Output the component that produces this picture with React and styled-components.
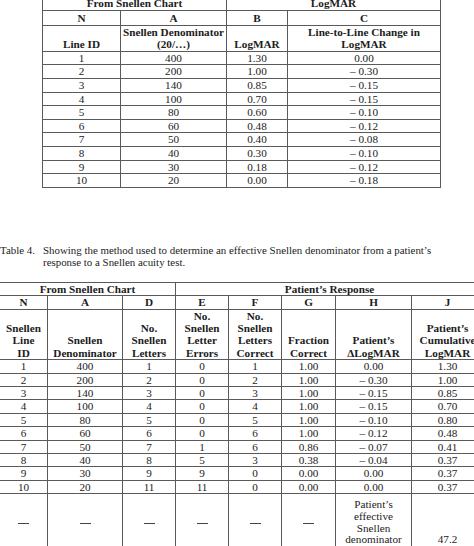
import React from "react";
import styled, { createGlobalStyle } from "styled-components";

const GlobalStyle = createGlobalStyle`
  html, body {
    margin: 0;
    padding: 0;
    background: #fff;
    overflow: hidden;
  }
  body {
    font-family: "Liberation Serif", "Times New Roman", serif;
    color: #1c1c1c;
  }
`;

const lineChart = [
  ["1", "400", "1.30", "0.00"],
  ["2", "200", "1.00", "– 0.30"],
  ["3", "140", "0.85", "– 0.15"],
  ["4", "100", "0.70", "– 0.15"],
  ["5", "80", "0.60", "– 0.10"],
  ["6", "60", "0.48", "– 0.12"],
  ["7", "50", "0.40", "– 0.08"],
  ["8", "40", "0.30", "– 0.10"],
  ["9", "30", "0.18", "– 0.12"],
  ["10", "20", "0.00", "– 0.18"],
];

const response = [
  ["1", "400", "1", "0", "1", "1.00", "0.00", "1.30"],
  ["2", "200", "2", "0", "2", "1.00", "– 0.30", "1.00"],
  ["3", "140", "3", "0", "3", "1.00", "– 0.15", "0.85"],
  ["4", "100", "4", "0", "4", "1.00", "– 0.15", "0.70"],
  ["5", "80", "5", "0", "5", "1.00", "– 0.10", "0.80"],
  ["6", "60", "6", "0", "6", "1.00", "– 0.12", "0.48"],
  ["7", "50", "7", "1", "6", "0.86", "– 0.07", "0.41"],
  ["8", "40", "8", "5", "3", "0.38", "– 0.04", "0.37"],
  ["9", "30", "9", "9", "0", "0.00", "0.00", "0.37"],
  ["10", "20", "11", "11", "0", "0.00", "0.00", "0.37"],
];

const serif = `"Liberation Serif", "Times New Roman", serif`;

const Page = styled.div`
  display: flex;
  flex-direction: column;
  font-family: ${serif};
`;

const TopWrap = styled.div`
  margin-top: -4px;
  padding-left: 42px;
`;

const Table = styled.table`
  border-collapse: collapse;
  table-layout: fixed;
  width: ${(p) => p.$width}px;
  font-family: ${serif};
  font-size: 11.2px;
  color: #1c1c1c;
  margin-left: ${(p) => p.$shift || 0}px;
`;

const Cell = styled.td`
  border: 1px solid #5a5a5a;
  padding: ${(p) => (p.$pad ? `${p.$pad}px 1px` : "0 1px")};
  text-align: center;
  vertical-align: ${(p) => p.$valign || "middle"};
  line-height: ${(p) => p.$lh || 12.4}px;
  white-space: nowrap;
  font-family: ${serif};
  font-weight: 400;
`;

const Head = styled(Cell).attrs({ as: "th" })`
  font-weight: 700;
`;

const Caption = styled.div`
  display: flex;
  margin-top: 56px;
  font-size: 10.9px;
  line-height: 12px;
`;

const CaptionLabel = styled.span`
  flex: 0 0 43px;
`;

const CaptionText = styled.span`
  flex: 1;
  padding-right: 30px;
`;

const BottomWrap = styled.div`
  margin-top: 14px;
`;

const Dash = styled.span`
  display: inline-block;
  width: 11px;
  border-top: 1px solid #444;
  vertical-align: middle;
`;

export default function App() {
  return (
    <Page>
      <GlobalStyle />
      <TopWrap>
        <Table $width={398}>
          <colgroup>
            <col style={{ width: 78 }} />
            <col style={{ width: 106 }} />
            <col style={{ width: 61 }} />
            <col style={{ width: 153 }} />
          </colgroup>
          <thead>
            <tr>
              <Head colSpan={2} $lh={12.6}>From Snellen Chart</Head>
              <Head colSpan={2} $lh={12.6}>LogMAR</Head>
            </tr>
            <tr>
              <Head $lh={14}>N</Head>
              <Head $lh={14}>A</Head>
              <Head $lh={14}>B</Head>
              <Head $lh={14}>C</Head>
            </tr>
            <tr>
              <Head $valign="bottom" $lh={12.6}>Line ID</Head>
              <Head $valign="bottom" $lh={12.6}>
                Snellen Denominator
                <br />
                (20/…)
              </Head>
              <Head $valign="bottom" $lh={12.6}>LogMAR</Head>
              <Head $valign="bottom" $lh={12.6}>
                Line-to-Line Change in
                <br />
                LogMAR
              </Head>
            </tr>
          </thead>
          <tbody>
            {lineChart.map((row) => (
              <tr key={row[0]}>
                {row.map((v, i) => (
                  <Cell key={i} $lh={12.6}>{v}</Cell>
                ))}
              </tr>
            ))}
          </tbody>
        </Table>
      </TopWrap>

      <Caption>
        <CaptionLabel>Table 4.</CaptionLabel>
        <CaptionText>
          Showing the method used to determine an effective Snellen denominator from a patient’s
          response to a Snellen acuity test.
        </CaptionText>
      </Caption>

      <BottomWrap>
        <Table $width={484} $shift={-1}>
          <colgroup>
            <col style={{ width: 48 }} />
            <col style={{ width: 75 }} />
            <col style={{ width: 53 }} />
            <col style={{ width: 53 }} />
            <col style={{ width: 53 }} />
            <col style={{ width: 54 }} />
            <col style={{ width: 76 }} />
            <col style={{ width: 72 }} />
          </colgroup>
          <thead>
            <tr>
              <Head colSpan={3}>From Snellen Chart</Head>
              <Head colSpan={5}>Patient’s Response</Head>
            </tr>
            <tr>
              {["N", "A", "D", "E", "F", "G", "H", "J"].map((l) => (
                <Head key={l}>{l}</Head>
              ))}
            </tr>
            <tr>
              <Head $valign="bottom">Snellen<br />Line<br />ID</Head>
              <Head $valign="bottom">Snellen<br />Denominator</Head>
              <Head $valign="bottom">No.<br />Snellen<br />Letters</Head>
              <Head $valign="bottom">No.<br />Snellen<br />Letter<br />Errors</Head>
              <Head $valign="bottom">No.<br />Snellen<br />Letters<br />Correct</Head>
              <Head $valign="bottom">Fraction<br />Correct</Head>
              <Head $valign="bottom">Patient’s<br />ΔLogMAR</Head>
              <Head $valign="bottom">Patient’s<br />Cumulative<br />LogMAR</Head>
            </tr>
          </thead>
          <tbody>
            {response.map((row) => (
              <tr key={row[0]}>
                {row.map((v, i) => (
                  <Cell key={i}>{v}</Cell>
                ))}
              </tr>
            ))}
            <tr>
              {[0, 1, 2, 3, 4, 5].map((i) => (
                <Cell key={i}>
                  <Dash />
                </Cell>
              ))}
              <Cell $lh={11.7} $pad={5}>
                Patient’s
                <br />
                effective
                <br />
                Snellen
                <br />
                denominator
              </Cell>
              <Cell $valign="bottom" $lh={11.7} $pad={5}>47.2</Cell>
            </tr>
          </tbody>
        </Table>
      </BottomWrap>
    </Page>
  );
}
